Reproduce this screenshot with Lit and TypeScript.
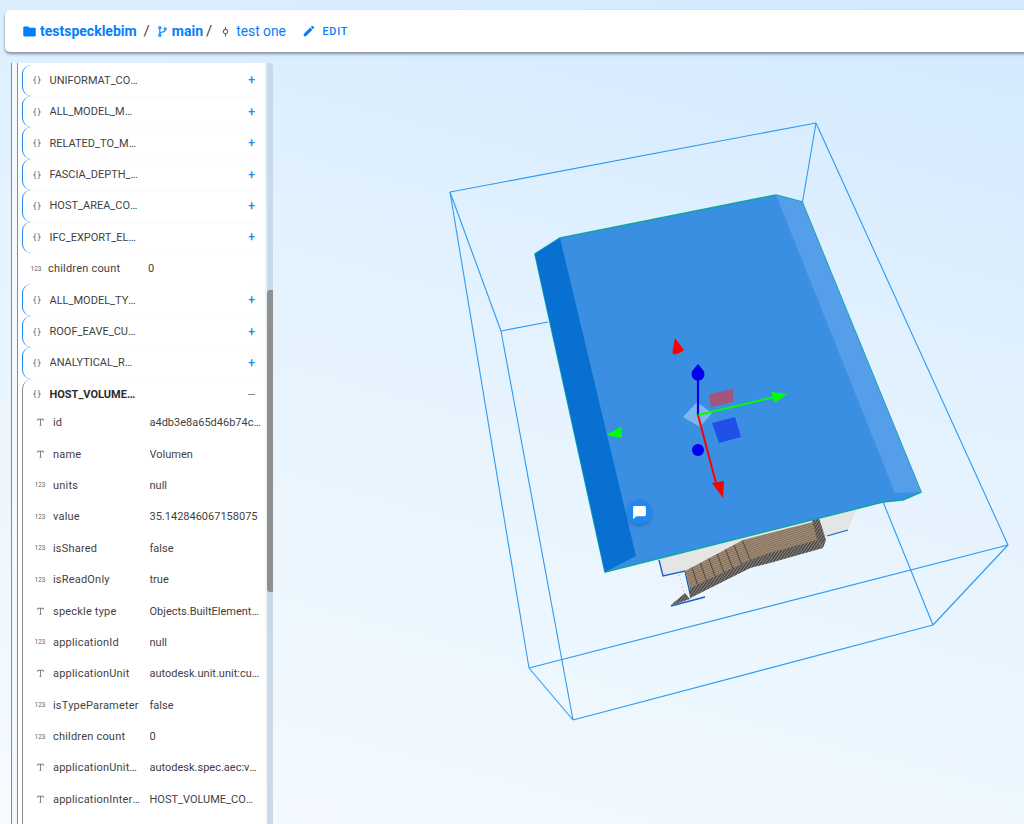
import { LitElement, html, svg, css } from 'lit';
import { customElement } from 'lit/decorators.js';

const FOLDER = 'M10,4H4C2.89,4 2,4.89 2,6V18A2,2 0 0,0 4,20H20A2,2 0 0,0 22,18V8C22,6.89 21.1,6 20,6H12L10,4Z';
const PENCIL = 'M20.71,7.04C21.1,6.65 21.1,6 20.71,5.63L18.37,3.29C18,2.9 17.35,2.9 16.96,3.29L15.12,5.12L18.87,8.87M3,17.25V21H6.75L17.81,9.93L14.06,6.18L3,17.25Z';
const BRANCH = 'M13,14C9.64,14 8.54,15.35 8.18,16.24C9.25,16.7 10,17.76 10,19A3,3 0 0,1 7,22A3,3 0 0,1 4,19C4,17.69 4.83,16.58 6,16.17V7.83C4.83,7.42 4,6.31 4,5A3,3 0 0,1 7,2A3,3 0 0,1 10,5C10,6.31 9.17,7.42 8,7.83V13.12C8.88,12.47 10.16,12 12,12C14.67,12 15.56,10.66 15.85,9.77C14.77,9.32 14,8.25 14,7A3,3 0 0,1 17,4A3,3 0 0,1 20,7C20,8.34 19.12,9.5 17.91,9.86C17.65,11.29 16.68,14 13,14M7,18A1,1 0 0,0 6,19A1,1 0 0,0 7,20A1,1 0 0,0 8,19A1,1 0 0,0 7,18M7,4A1,1 0 0,0 6,5A1,1 0 0,0 7,6A1,1 0 0,0 8,5A1,1 0 0,0 7,4M17,6A1,1 0 0,0 16,7A1,1 0 0,0 17,8A1,1 0 0,0 18,7A1,1 0 0,0 17,6Z';
const COMMIT = 'M17,12C17,14.42 15.28,16.44 13,16.9V21H11V16.9C8.72,16.44 7,14.42 7,12C7,9.58 8.72,7.56 11,7.1V3H13V7.1C15.28,7.56 17,9.58 17,12M12,9A3,3 0 0,0 9,12A3,3 0 0,0 12,15A3,3 0 0,0 15,12A3,3 0 0,0 12,9Z';
const BRACES = 'M8,3A2,2 0 0,0 6,5V9A2,2 0 0,1 4,11H3V13H4A2,2 0 0,1 6,15V19A2,2 0 0,0 8,21H10V19H8V14A2,2 0 0,0 6,12A2,2 0 0,0 8,10V5H10V3M16,3A2,2 0 0,1 18,5V9A2,2 0 0,0 20,11H21V13H20A2,2 0 0,0 18,15V19A2,2 0 0,1 16,21H14V19H16V14A2,2 0 0,1 18,12A2,2 0 0,1 16,10V5H14V3H16Z';
const TEXT = 'M18.5,4L19.66,8.35L18.7,8.61C18.25,7.74 17.79,6.87 17.26,6.43C16.73,6 16.11,6 15.5,6H13V16.5C13,17 13,17.5 13.33,17.75C13.67,18 14.33,18 15,18V19H9V18C9.67,18 10.33,18 10.67,17.75C11,17.5 11,17 11,16.5V6H8.5C7.89,6 7.27,6 6.74,6.43C6.21,6.87 5.75,7.74 5.3,8.61L4.34,8.35L5.5,4H18.5Z';

const icon = (d: string, cls = '') => html`<svg class="ic ${cls}" viewBox="0 0 24 24"><path d=${d}></path></svg>`;

const objectsTop = ['UNIFORMAT_CODE', 'ALL_MODEL_MODEL', 'RELATED_TO_MASS', 'FASCIA_DEPTH_PARAM', 'HOST_AREA_COMPUTED', 'IFC_EXPORT_ELEMENT'];
const objectsMid = ['ALL_MODEL_TYPE_NAME', 'ROOF_EAVE_CUT_TYPE', 'ANALYTICAL_ROUGHNESS'];

const fields: [string, string, string][] = [
  ['t', 'id', 'a4db3e8a65d46b74c9f0e21a'],
  ['t', 'name', 'Volumen'],
  ['n', 'units', 'null'],
  ['n', 'value', '35.142846067158075'],
  ['n', 'isShared', 'false'],
  ['n', 'isReadOnly', 'true'],
  ['t', 'speckle type', 'Objects.BuiltElements.Revit'],
  ['n', 'applicationId', 'null'],
  ['t', 'applicationUnit', 'autodesk.unit.unit:cubicMeters'],
  ['n', 'isTypeParameter', 'false'],
  ['n', 'children count', '0'],
  ['t', 'applicationUnitType', 'autodesk.spec.aec:volume'],
  ['t', 'applicationInternalName', 'HOST_VOLUME_COMPUTED'],
];

@customElement('app-root')
export class AppRoot extends LitElement {
  static styles = css`
    :host {
      display: block;
      position: relative;
      height: 824px;
      overflow: hidden;
      font-family: Roboto, 'Liberation Sans', sans-serif;
      background: linear-gradient(195deg, #d2e9fe 0%, #e5f3fe 45%, #f6fbff 100%);
      box-sizing: border-box;
      padding: 10px 0 0 5px;
    }
    .scene {
      position: absolute;
      inset: 0;
      width: 1024px;
      height: 824px;
    }
    .topbar {
      position: relative;
      display: flex;
      align-items: center;
      height: 42px;
      margin-right: -8px;
      padding-left: 17px;
      background: #fff;
      border-radius: 5px;
      box-shadow: 0 2px 3px rgba(40, 50, 70, 0.5);
      color: #047efb;
      font-size: 13.8px;
    }
    .ic { width: 12px; height: 12px; fill: currentColor; flex: none; }
    .topbar .ic { width: 15px; height: 15px; }
    .topbar b { font-weight: 700; font-size: 14px; margin-left: 3px; }
    .sep { color: #444; font-size: 15px; }
    .sep-first { margin: 0 6px 0 7px; }
    .sep-second { margin-left: 3px; }
    .topbar .branch { width: 13px; height: 13px; }
    .topbar .commit { width: 13px; height: 13px; color: #666; margin: 0 4px 0 7px; }
    .topbar .pencil { width: 14px; height: 14px; margin-left: 16.5px; }
    .edit { font-size: 10.8px; font-weight: 500; letter-spacing: 0.8px; margin-left: 6px; }
    .sidebar {
      position: relative;
      display: flex;
      width: 262px;
      height: 761px;
      margin: 11px 0 0 6px;
      border-left: 1px solid #8a8a8a;
      padding-left: 5px;
      background: linear-gradient(#f4f9fe, #f4f9fe) 0 0 / 5px 100% no-repeat;
    }
    .panel {
      flex: none;
      width: 248px;
      border-left: 1px solid #8a8a8a;
      background: #fff;
      padding: 1.7px 3px 0 4px;
      box-sizing: border-box;
      color: #3f3f3f;
      font-size: 11px;
      letter-spacing: 0.2px;
    }
    .track {
      position: relative;
      width: 6px;
      margin-left: 2px;
      background: #c9d9e8;
      border-top-right-radius: 3px;
    }
    .thumb {
      position: absolute;
      left: 0;
      right: 0;
      top: 227px;
      height: 302px;
      background: #8f8f8f;
      border-radius: 3px 0 0 3px;
    }
    .row {
      display: flex;
      align-items: center;
      height: 31.4px;
      box-sizing: border-box;
    }
    .obj {
      border-left: 1.6px solid #1e88f0;
      border-radius: 9px;
      padding-left: 8.5px;
      box-shadow: 0 1px 2px rgba(210, 225, 240, 0.18);
    }
    .obj .ic { color: #777; width: 10px; height: 10px; }
    .name { width: 90px; margin-left: 8px; letter-spacing: 0; white-space: nowrap; overflow: hidden; text-overflow: ellipsis; }
    .plus { margin-left: auto; margin-right: 7px; color: #1e88f0; font-size: 12px; font-weight: 500; line-height: 1; }
    .minus { margin-left: auto; margin-right: 7px; width: 7px; height: 1px; background: #888; }
    .loose { padding-left: 8px; }
    .num { color: #666; font-size: 6.5px; letter-spacing: 0; width: 12px; text-align: center; flex: none; }
    .loose .label { margin-left: 6px; width: 100px; }
    .group {
      border-left: 1.6px solid #8a8a8a;
      border-radius: 10px;
      padding-left: 8.5px;
      height: 460px;
    }
    .group .head { height: 28.4px; padding-top: 2.6px; }
    .group .head .ic { color: #777; width: 10px; height: 10px; }
    .group .head .name { font-weight: 700; color: #2c2c2c; }
    .field { padding-left: 2.5px; }
    .field .ic { color: #777; width: 11px; height: 11px; margin: 0 0.5px; }
    .label { margin-left: 7px; width: 90px; white-space: nowrap; overflow: hidden; text-overflow: ellipsis; }
    .val { width: 112px; margin-left: 6.5px; letter-spacing: 0; white-space: nowrap; overflow: hidden; text-overflow: ellipsis; }
    .loose .val { width: 60px; margin-left: 0; }
  `;

  private renderObject(name: string) {
    return html`<div class="row obj">
      ${icon(BRACES)}<span class="name">${name}</span><span class="plus">+</span>
    </div>`;
  }

  private renderField([kind, name, value]: [string, string, string]) {
    return html`<div class="row field">
      ${kind === 't' ? icon(TEXT) : html`<span class="num">123</span>`}
      <span class="label">${name}</span>
      <span class="val">${value}</span>
    </div>`;
  }

  // the model view is a free canvas, so all of it is drawn at its own coordinates
  private renderScene() {
    const box = [
      '450,192 816,123', '816,123 1008,545', '1008,545 933,625', '933,625 573,720', '573,720 529,668',
      '529,668 450,192', '450,192 501,331', '501,331 573,720', '501,331 548,322', '529,668 1008,545',
      '816,123 802,205', '933,625 860,445',
    ];
    // step edges on the lower flight, between its upper edge and the rail
    const steps = [0, 1, 2, 3, 4, 5, 6].map((i) => ({
      x1: 692 + i * 8.4,
      y1: 567.5 - i * 4.5,
      x2: 698 + i * 8.8,
      y2: 586 - i * 4.1,
    }));
    return svg`<svg class="scene" viewBox="0 0 1024 824">
      <defs>
        <pattern id="tread" width="2" height="2" patternUnits="userSpaceOnUse" patternTransform="rotate(70)">
          <rect width="2" height="2" fill="#a8917a"></rect>
          <rect width="0.9" height="2" fill="#7b6a58"></rect>
        </pattern>
        <pattern id="rail" width="2.4" height="2.4" patternUnits="userSpaceOnUse" patternTransform="rotate(35)">
          <rect width="2.4" height="2.4" fill="#8c8680"></rect>
          <rect width="1.2" height="2.4" fill="#3f3c3a"></rect>
        </pattern>
        <filter id="soft" x="-40%" y="-40%" width="180%" height="180%">
          <feDropShadow dx="0" dy="1.5" stdDeviation="2" flood-color="#0a3a70" flood-opacity="0.4"></feDropShadow>
        </filter>
      </defs>
      ${box.map((l) => {
        const [a, b] = l.split(' ').map((p) => p.split(','));
        return svg`<line x1=${a[0]} y1=${a[1]} x2=${b[0]} y2=${b[1]} stroke="#2d9af2" stroke-width="1.1"></line>`;
      })}

      <polygon points="659,558 857,508 848,530 752,555 685,571 663,576" fill="#e4e6e6"></polygon>
      <polyline points="659,560 663,576 685,571 691,598" fill="none" stroke="#1a5fc8" stroke-width="1.4"></polyline>
      <line x1="827" y1="536" x2="848" y2="530" stroke="#1a5fc8" stroke-width="1.2"></line>
      <line x1="671" y1="606" x2="705" y2="597" stroke="#1a5fc8" stroke-width="1.4"></line>
      <polygon points="685,571 743,540 813,522 820,542 752,567 692,597" fill="url(#tread)"></polygon>
      ${steps.map((s) => svg`<line x1=${s.x1} y1=${s.y1} x2=${s.x2} y2=${s.y2} stroke="#54463a" stroke-width="1"></line>`)}
      <polygon points="690,588 750,560 770,553 817,540 823,548 770,563 750,568 690,598" fill="url(#rail)"></polygon>
      <polygon points="812,520 819,518 826,540 823,548 817,540" fill="url(#rail)"></polygon>
      <polygon points="671,605 685,593 690,599 676,604" fill="url(#rail)"></polygon>
      <line x1="679" y1="575" x2="684" y2="592" stroke="#8f969a" stroke-width="0.8" stroke-dasharray="1 3"></line>

      <polygon points="535,254 560,238 776,195 802,202 921,492 903,500 883,502 605,572" fill="#3b8fe2" stroke="#0fa5a8" stroke-width="1.6"></polygon>
      <polygon points="535,254 560,238 636,556 605,572" fill="#0870d0"></polygon>
      <polygon points="776,195 802,202 921,492 895,493" fill="#559ee9"></polygon>

      <polygon points="683,417 697,402 712,413 700,427" fill="#fff" opacity="0.35"></polygon>
      <polygon points="709,394 733,389 733,402 711,407" fill="#a3567c"></polygon>
      <polygon points="712,423 735,417 741,437 719,443" fill="#2150e8"></polygon>
      <line x1="698" y1="415" x2="698" y2="376" stroke="#0000ee" stroke-width="2.2"></line>
      <path d="M698,364 L703,370 A6.5,6.5 0 1 1 693,370 Z" fill="#0000ee"></path>
      <circle cx="698" cy="450" r="6" fill="#0000ee"></circle>
      <line x1="698" y1="415" x2="775" y2="397" stroke="#00ff00" stroke-width="2"></line>
      <polygon points="787,394 771,392 775,403" fill="#00ff00"></polygon>
      <polygon points="606,435 621,427 622,438" fill="#00ff00"></polygon>
      <line x1="698" y1="415" x2="716" y2="483" stroke="#ff0000" stroke-width="2"></line>
      <polygon points="723,498 712,483 724,481" fill="#ff0000"></polygon>
      <path d="M675,338 L684,350 Q678,355 673,354 Q672,352 673,349 Z" fill="#ff0000"></path>

      <circle cx="639.5" cy="512" r="12" fill="#1e88f0" filter="url(#soft)"></circle>
      <path d="M634.5,506 h10 a1.4,1.4 0 0 1 1.4,1.4 v7.4 a1.4,1.4 0 0 1 -1.4,1.4 h-8 l-3.4,3 v-11.8 a1.4,1.4 0 0 1 1.4,-1.4 z" fill="#fff"></path>
    </svg>`;
  }

  render() {
    return html`
      ${this.renderScene()}
      <header class="topbar">
        ${icon(FOLDER)}
        <b>testspecklebim</b>
        <span class="sep sep-first">/</span>
        ${icon(BRANCH, 'branch')}
        <b>main</b>
        <span class="sep sep-second">/</span>
        ${icon(COMMIT, 'commit')}
        <span>test one</span>
        ${icon(PENCIL, 'pencil')}
        <span class="edit">EDIT</span>
      </header>
      <aside class="sidebar">
        <div class="panel">
          ${objectsTop.map((o) => this.renderObject(o))}
          <div class="row loose">
            <span class="num">123</span><span class="label">children count</span><span class="val">0</span>
          </div>
          ${objectsMid.map((o) => this.renderObject(o))}
          <div class="group">
            <div class="row head">
              ${icon(BRACES)}<span class="name">HOST_VOLUME_COMPUTED</span><span class="minus"></span>
            </div>
            ${fields.map((f) => this.renderField(f))}
          </div>
        </div>
        <div class="track"><div class="thumb"></div></div>
      </aside>
    `;
  }
}
